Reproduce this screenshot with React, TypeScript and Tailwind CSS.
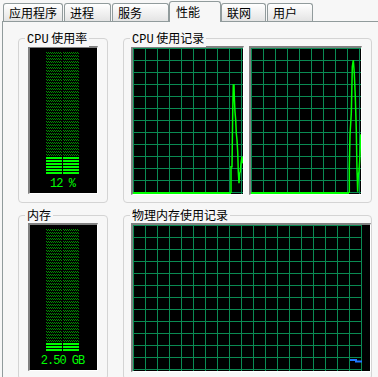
import React from "react";

const GRID = "#0a8a52";
const GREEN = "#00ff00";
const PANEL = "#f7f7f7";

const tabs = [
  { name: "应用程序", w: "w-[60px]" },
  { name: "进程", w: "w-[47px]" },
  { name: "服务", w: "w-[57px]" },
  { name: "性能", w: "w-[52px]", active: true },
  { name: "联网", w: "w-[45px]" },
  { name: "用户", w: "w-[46px]" },
];

// CPU history traces, in graph pixels (110 x 146)
const cpu1 =
  "98,145 98,118.7 99,118.7 99.7,65.3 100.3,37 101,37 101.3,48.7 102,63.7 102.7,72 103.3,85.3 104,92 104.7,103.7 105.3,123.7 106,135.3 106.7,125.3 107.3,123.7 108,115.3 109,108.7 109.7,115.3";
const cpu2 =
  "98.3,145 98.3,118.7 99,87 100.3,65.3 101.3,18.7 102.3,12 103.3,25.3 104.3,48.7 105.3,82 106,122 106.7,143.7 107.3,127 108,123.7 109,107 109.7,87 110,87";

function Sunken({ children, className = "" }: { children: React.ReactNode; className?: string }) {
  return (
    <div
      className={`bg-black border-t-2 border-l-2 border-r border-b border-t-[#808080] border-l-[#808080] border-r-white border-b-white ${className}`}
    >
      {children}
    </div>
  );
}

function Graph({
  width,
  height,
  children,
}: {
  width: number;
  height: number;
  children?: React.ReactNode;
}) {
  const xs = Array.from({ length: Math.floor(width / 12) + 1 }, (_, i) => i * 12);
  const ys = Array.from({ length: Math.floor(height / 12) + 1 }, (_, i) => i * 12);
  return (
    <Sunken>
      <svg width={width} height={height} className="block">
        <g fill={GRID} shapeRendering="crispEdges">
          {xs.map((x) => (
            <rect key={`x${x}`} x={x} y={0} width={1} height={height} />
          ))}
          {ys.map((y) => (
            <rect key={`y${y}`} x={0} y={y} width={width} height={1} />
          ))}
        </g>
        {children}
      </svg>
    </Sunken>
  );
}

function MeterColumn({ id, bright }: { id: string; bright: number }) {
  const rows = 41;
  const dim = (rows - bright) * 3;
  return (
    <svg width="16" height={rows * 3} className="block" shapeRendering="crispEdges">
      <defs>
        <pattern id={id} width="2" height="3" patternUnits="userSpaceOnUse">
          <rect x="0" y="0" width="1" height="1" fill="#009000" />
          <rect x="1" y="1" width="1" height="1" fill="#009000" />
        </pattern>
      </defs>
      <rect width="16" height={dim} fill={`url(#${id})`} />
      {Array.from({ length: bright }).map((_, i) => (
        <rect key={i} x="0" y={dim + i * 3} width="16" height="2" fill={GREEN} />
      ))}
    </svg>
  );
}

function Meter({ id, bright, label }: { id: string; bright: number; label: string }) {
  return (
    <Sunken className="w-[70px] h-[148px] flex flex-col items-center pt-[4px] pr-[2px]">
      <div className="flex gap-[1px]">
        <MeterColumn id={`${id}-a`} bright={bright} />
        <MeterColumn id={`${id}-b`} bright={bright} />
      </div>
      <div className="mt-[3px] text-[12px] leading-[12px] tracking-[-1px] text-[#00ff00] font-['Liberation_Mono',monospace] whitespace-pre">
        {label}
      </div>
    </Sunken>
  );
}

function GroupBox({
  title,
  className,
  children,
}: {
  title: React.ReactNode;
  className: string;
  children: React.ReactNode;
}) {
  return (
    <div className={`relative shrink-0 h-[165px] border border-[#d4d4d4] rounded-[4px] pt-[7px] ${className}`}>
      <span className="absolute left-[6px] -top-[8px] px-[2px] bg-[#f7f7f7] text-[12px] leading-[14px] text-black whitespace-nowrap">
        {title}
      </span>
      {children}
    </div>
  );
}

export default function App() {
  return (
    <div
      className="w-[378px] h-[377px] overflow-hidden font-['Noto_Sans_CJK_SC',sans-serif] text-black"
      style={{ background: PANEL }}
    >
      {/* Tab strip */}
      <div className="h-[21px] flex items-end gap-[1px] pl-[3px]">
        {tabs.map((t) =>
          t.active ? (
            <div
              key={t.name}
              className={`${t.w} relative z-10 h-[21px] -mb-[1px] -mx-[1px] border border-b-0 border-[#919b9c] rounded-t-[3px] bg-[#f7f7f7] pl-[6px] pt-[4px] text-[12px] leading-[12px]`}
            >
              {t.name}
            </div>
          ) : (
            <div
              key={t.name}
              className={`${t.w} h-[18px] border border-b-0 border-[#919b9c] rounded-t-[3px] bg-gradient-to-b from-[#ffffff] to-[#e4e4e4] pl-[5px] pt-[3px] text-[12px] leading-[12px]`}
            >
              {t.name}
            </div>
          )
        )}
      </div>

      {/* Performance panel */}
      <div className="ml-[2px] h-[356px] border-l border-t border-[#919b9c] pl-[15px] pt-[16px] flex flex-col gap-[12px]">
        <div className="flex gap-[15px]">
          <GroupBox
            className="w-[90px] pl-[9px]"
            title={
              <>
                <span className="font-['Liberation_Mono',monospace] text-[12px]">CPU</span> 使用率
              </>
            }
          >
            <Meter id="cpu-meter" bright={6} label="12 %" />
          </GroupBox>
          <GroupBox
            className="w-[249px] pl-[7px]"
            title={
              <>
                <span className="font-['Liberation_Mono',monospace] text-[12px]">CPU</span> 使用记录
              </>
            }
          >
            <div className="flex gap-[5px]">
              <Graph width={110} height={146}>
                <rect x="0" y="144" width="98" height="2" fill={GREEN} />
                <polyline points={cpu1} fill="none" stroke={GREEN} strokeWidth="1.5" />
              </Graph>
              <Graph width={110} height={146}>
                <rect x="0" y="144" width="98" height="2" fill={GREEN} />
                <polyline points={cpu2} fill="none" stroke={GREEN} strokeWidth="1.5" />
              </Graph>
            </div>
          </GroupBox>
        </div>

        <div className="flex gap-[15px]">
          <GroupBox className="w-[90px] pl-[9px]" title="内存">
            <Meter id="mem-meter" bright={3} label="2.50 GB" />
          </GroupBox>
          <GroupBox className="w-[249px] pl-[7px]" title="物理内存使用记录">
            <Graph width={229} height={146}>
              <polyline
                points="217,135 223,135 223,136.5 229,136.5"
                fill="none"
                stroke="#1e78ff"
                strokeWidth="2"
              />
            </Graph>
          </GroupBox>
        </div>
      </div>
    </div>
  );
}
